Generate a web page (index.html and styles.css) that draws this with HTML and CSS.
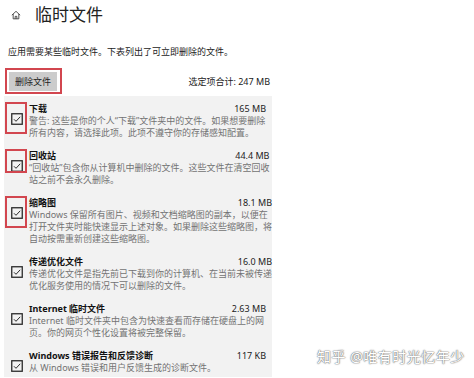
FILE: index.html
```html
<!DOCTYPE html>
<html lang="zh-CN">
    <head>
        <meta charset="utf-8">
        <meta name="viewport" content="width=device-width, initial-scale=1">
        <title>临时文件</title>
        <link rel="stylesheet" href="styles.css">
    </head>
    <body>
        <svg class="defs">
            <symbol id="check-symbol" viewBox="0 0 12 12">
                <rect x="0.75" y="0.75" width="10.5" height="10.5" fill="none" stroke="#2b2b2b" stroke-width="1.3"/>
                <polyline points="3,6.3 5,8.3 9.2,3.8" fill="none" stroke="#2b2b2b" stroke-width="1"/>
            </symbol>
        </svg>

        <div class="page">
            <header class="header">
                <svg class="home" viewBox="0 0 12 12">
                    <path d="M1 6.2 L6 1.6 L11 6.2 M2.6 4.8 V10.6 H9.4 V4.8 M5 10.6 V7.6 H7 V10.6" fill="none" stroke="#333" stroke-width="1" stroke-linejoin="round"/>
                </svg>
                <h1>临时文件</h1>
            </header>

            <p class="intro">应用需要某些临时文件。下表列出了可立即删除的文件。</p>

            <div class="toolbar">
                <div class="mark-btn"><button class="btn">删除文件</button></div>
                <span class="total">选定项合计: 247 MB</span>
            </div>

            <div class="panel">
                <div class="item">
                    <span class="box mark mark-tall"><svg><use href="#check-symbol"></use></svg></span>
                    <div class="body">
                        <div class="head"><b>下载</b><span>165 MB</span></div>
                        <p class="desc">警告: 这些是你的个人“下载”文件夹中的文件。如果想要删除<br>所有内容，请选择此项。此项不遵守你的存储感知配置。</p>
                    </div>
                </div>
                <div class="item">
                    <span class="box mark mark-short"><svg><use href="#check-symbol"></use></svg></span>
                    <div class="body">
                        <div class="head"><b>回收站</b><span>44.4 MB</span></div>
                        <p class="desc">“回收站”包含你从计算机中删除的文件。这些文件在清空回收<br>站之前不会永久删除。</p>
                    </div>
                </div>
                <div class="item">
                    <span class="box mark mark-tall"><svg><use href="#check-symbol"></use></svg></span>
                    <div class="body">
                        <div class="head"><b>缩略图</b><span>18.1 MB</span></div>
                        <p class="desc">Windows 保留所有图片、视频和文档缩略图的副本，以便在<br>打开文件夹时能快速显示上述对象。如果删除这些缩略图，将<br>自动按需重新创建这些缩略图。</p>
                    </div>
                </div>
                <div class="item">
                    <span class="box"><svg><use href="#check-symbol"></use></svg></span>
                    <div class="body">
                        <div class="head"><b>传递优化文件</b><span>16.0 MB</span></div>
                        <p class="desc">传递优化文件是指先前已下载到你的计算机、在当前未被传递<br>优化服务使用的情况下可以删除的文件。</p>
                    </div>
                </div>
                <div class="item">
                    <span class="box"><svg><use href="#check-symbol"></use></svg></span>
                    <div class="body">
                        <div class="head"><b>Internet 临时文件</b><span>2.63 MB</span></div>
                        <p class="desc">Internet 临时文件夹中包含为快速查看而存储在硬盘上的网<br>页。你的网页个性化设置将被完整保留。</p>
                    </div>
                </div>
                <div class="item">
                    <span class="box"><svg><use href="#check-symbol"></use></svg></span>
                    <div class="body">
                        <div class="head"><b>Windows 错误报告和反馈诊断</b><span>117 KB</span></div>
                        <p class="desc">从 Windows 错误和用户反馈生成的诊断文件。</p>
                    </div>
                </div>
            </div>
        </div>

        <div class="watermark">知乎 @唯有时光忆年少</div>
    </body>
</html>
```

FILE: styles.css
```css
html, body {height: 100%}
body {
    font-family: "Noto Sans", "Noto Sans CJK SC", sans-serif;
    color: #222;
    background: #fff;
    margin: 0;
    overflow: hidden;
}
.defs {
    display: none;
}
.page {
    width: 268px;
    margin-left: 4px;
}
.header {
    display: flex;
    align-items: center;
    height: 30px;
    padding-left: 7px;
}
.home {
    width: 10px;
    height: 10px;
    margin-right: 14px;
}
h1 {
    margin: 0;
    font-size: 17px;
    font-weight: normal;
    line-height: 30px;
}
.intro {
    margin: 16px 0 0 4px;
    font-size: 9px;
    line-height: 12px;
}
.toolbar {
    display: flex;
    align-items: center;
    justify-content: space-between;
    margin-top: 10px;
    padding-left: 1px;
    padding-right: 2px;
}
.mark-btn {
    border: 2px solid #d2464f;
    padding: 2px 3px 1px 2px;
}
.btn {
    display: block;
    width: 48px;
    height: 19px;
    padding: 0;
    border: none;
    background: #cccccc;
    color: #222;
    font: inherit;
    font-size: 9px;
}
.total {
    font-size: 9px;
}
.panel {
    margin-top: 2px;
    padding: 6px 6px 3px 7px;
    background: #f2f2f2;
}
.item {
    display: grid;
    grid-template-columns: 12px 1fr;
    column-gap: 6px;
    margin-bottom: 10px;
}
.item:last-child {
    margin-bottom: 0;
}
.box {
    position: relative;
    width: 12px;
    height: 12px;
    margin-top: 11px;
}
.box svg {
    display: block;
    width: 12px;
    height: 12px;
}
/* red annotation frames drawn over the checkboxes */
.mark::before {
    content: "";
    position: absolute;
    left: -6px;
    width: 18px;
    border: 2px solid #d2464f;
}
.mark-tall::before {
    top: -11px;
    height: 28px;
}
.mark-short::before {
    top: -11px;
    height: 20px;
}
.head {
    display: flex;
    justify-content: space-between;
    font-size: 9px;
    line-height: 13px;
}
.head b {
    color: #111;
}
.desc {
    margin: 0;
    font-size: 9px;
    line-height: 12px;
    color: #737373;
    white-space: nowrap;
}
.watermark {
    position: absolute;
    left: 317px;
    top: 346px;
    font-size: 14px;
    color: #fff;
    letter-spacing: 0.5px;
    text-shadow: 0 0 1px #777, 0 0 1px #777, 0 0 2px #999;
}
```
